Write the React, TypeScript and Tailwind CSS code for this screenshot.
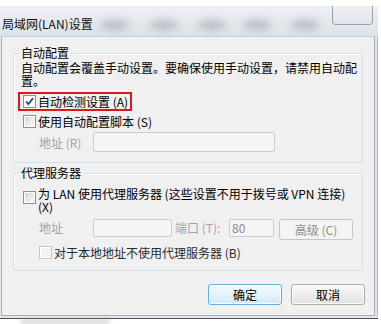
import React from "react";

function Check({ checked = false, disabled = false }: { checked?: boolean; disabled?: boolean }) {
  return (
    <span
      className={`relative flex h-[13px] w-[13px] shrink-0 items-center justify-center border bg-white ${
        disabled ? "border-[#c4c6c8]" : "border-[#8e8f8f]"
      }`}
    >
      <span
        className={`h-[9px] w-[9px] ${
          checked
            ? "bg-white"
            : disabled
            ? "bg-[#f3f3f3]"
            : "bg-linear-to-br from-[#d3d6da] to-[#fbfbfb]"
        }`}
      />
      {checked && (
        <svg className="absolute left-0 top-0" width="11" height="11" viewBox="0 0 11 11">
          <path d="M2 5.5 L4.3 8 L9 2.2" fill="none" stroke="#28457f" strokeWidth="1.8" />
        </svg>
      )}
    </span>
  );
}

function Blob({ className }: { className: string }) {
  return <div className={`absolute h-[8px] w-[26px] rounded-full bg-[#8e959d] opacity-60 blur-[4px] ${className}`} />;
}

export default function App() {
  return (
    <div className="relative flex h-[324px] w-[381px] flex-col overflow-hidden bg-white font-['Noto_Sans_CJK_SC',sans-serif] text-[12px] text-black">
      <div className="h-[6px] shrink-0 bg-white" />

      <div className="w-[378px] bg-[#dfe5eb]">
        {/* title bar */}
        <div className="relative h-[30px] bg-linear-to-b from-[#eef1f4] to-[#dce2e8] pl-[2px] pt-[9px]">
          <Blob className="left-[102px] top-[15px]" />
          <Blob className="left-[151px] top-[15px]" />
          <Blob className="left-[199px] top-[15px]" />
          <Blob className="left-[244px] top-[15px]" />
          <Blob className="left-[292px] top-[15px]" />
          <div className="absolute right-[5px] top-0 h-[19px] w-[41px] rounded-b-[4px] border border-t-0 border-[#9aa3ad] bg-linear-to-b from-[#eef1f4] to-[#e1e5ea]" />
          <span className="relative leading-[14px] text-[#111]">局域网(LAN)设置</span>
        </div>

        <div className="flex">
          <div className="w-[1px] bg-[#e6eaee]" />
          {/* client area */}
          <div className="flex h-[280px] w-[374px] flex-col border border-[#a6aeb6] border-t-[#c9d0d7] bg-[#f0f0f0]">
            <fieldset className="ml-[11px] mt-[9px] w-[350px] rounded-[3px] border border-[#d5dfe5] pb-[10px] pl-[5px] shadow-[inset_1px_1px_0_#fff]">
              <legend className="px-[2px] leading-[14px]">自动配置</legend>
              <div className="mt-[1px] whitespace-nowrap pl-[2px] leading-[13px]">
                自动配置会覆盖手动设置。要确保使用手动设置，请禁用自动配
                <br />
                置。
              </div>
              <div className="ml-[-1px] mt-[5px] flex h-[19px] w-[114px] items-center gap-[2px] border-2 border-[#e3141c] pl-[3px]">
                <Check checked />
                <span className="leading-[13px]">自动检测设置 (A)</span>
              </div>
              <div className="mt-[3px] flex h-[14px] items-center gap-[2px] pl-[4px]">
                <Check />
                <span className="leading-[13px]">使用自动配置脚本 (S)</span>
              </div>
              <div className="mt-[4px] flex h-[20px] items-center pl-[20px]">
                <span className="w-[54px] leading-[13px] text-[#a3a3a3]">地址 (R)</span>
                <div className="h-[20px] w-[182px] rounded-[2px] border border-[#c9cdd1] bg-[#f5f5f5]" />
              </div>
            </fieldset>

            <fieldset className="ml-[11px] mt-[3px] w-[350px] rounded-[3px] border border-[#d5dfe5] pb-[11px] pl-[5px] shadow-[inset_1px_1px_0_#fff]">
              <legend className="px-[2px] leading-[14px]">代理服务器</legend>
              <div className="mt-[7px] flex items-start gap-[2px] pl-[4px]">
                <span className="mt-[4px]">
                  <Check />
                </span>
                <span className="whitespace-nowrap leading-[13px]">
                  为 LAN 使用代理服务器 (这些设置不用于拨号或 VPN 连接)
                  <br />
                  (X)
                </span>
              </div>
              <div className="mt-[6px] flex h-[21px] items-start pl-[20px]">
                <span className="mt-[2px] w-[54px] leading-[14px] text-[#a3a3a3]">地址</span>
                <div className="h-[18px] w-[79px] rounded-[2px] border border-[#c9cdd1] bg-[#f5f5f5]" />
                <span className="ml-[3px] mt-[2px] w-[54px] leading-[14px] text-[#a3a3a3]">端口 (T):</span>
                <div className="flex h-[18px] w-[45px] items-center rounded-[2px] border border-[#c9cdd1] bg-[#f5f5f5] pl-[2px] text-[#8a8a8a]">
                  80
                </div>
                <div className="ml-[5px] flex h-[21px] w-[74px] items-center justify-center rounded-[3px] border border-[#c4c6c8] bg-[#f4f4f4] text-[#8d8d8d]">
                  高级 (C)
                </div>
              </div>
              <div className="mt-[6px] flex h-[13px] items-center gap-[2px] pl-[20px]">
                <Check disabled />
                <span className="leading-[13px] text-[#2a2a2a]">对于本地地址不使用代理服务器 (B)</span>
              </div>
            </fieldset>

            <div className="mt-[13px] flex justify-end gap-[9px] pr-[9px]">
              <button className="flex h-[21px] w-[74px] items-center justify-center rounded-[3px] border border-[#64afdd] bg-linear-to-b from-[#f4fafe] via-[#e4f2fb] to-[#cfe8f8] shadow-[inset_0_0_0_1px_#f8fcff]">
                确定
              </button>
              <button className="flex h-[21px] w-[74px] items-center justify-center rounded-[3px] border border-[#adadad] bg-linear-to-b from-[#f9f9f9] to-[#e2e2e2] shadow-[inset_0_0_0_1px_#fcfcfc]">
                取消
              </button>
            </div>
          </div>
          <div className="w-[3px] border-r border-[#b4bcc4] bg-[#dfe5eb]" />
        </div>
        <div className="h-[2px] bg-[#e3e7eb]" />
      </div>
      <div className="h-[1px] w-[378px] bg-[#4b4f54]" />
      <div className="relative flex-1 bg-white">
        <div className="absolute left-[20px] top-[1px] h-[3px] w-[90px] rounded-full bg-[#9a9a9a] opacity-60 blur-[2px]" />
      </div>
    </div>
  );
}
